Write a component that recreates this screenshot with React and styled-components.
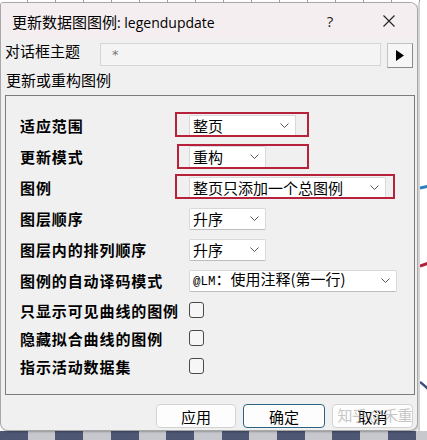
import React from "react";
import styled, { createGlobalStyle } from "styled-components";

const Global = createGlobalStyle`
  html, body { margin: 0; padding: 0; }
  body { font-family: "Noto Sans CJK SC", "Noto Sans", sans-serif; color: #000; }
`;

const CJK = `"Noto Sans CJK SC", "Noto Sans", sans-serif`;

const Page = styled.div`
  position: relative;
  width: 427px;
  height: 440px;
  overflow: hidden;
  display: flex;
  flex-direction: column;
  background: #fff;
`;

const TopStrip = styled.div`
  height: 2px;
  flex: none;
  background: repeating-linear-gradient(90deg, #fff 0 27px, #9a9a9a 27px 28px);
`;

const Middle = styled.div`
  display: flex;
  flex: none;
  height: 429px;
`;

const Dialog = styled.div`
  position: relative;
  box-sizing: border-box;
  width: 418px;
  height: 429px;
  flex: none;
  background: #f0f0f0;
  border: 1px solid #a8a8a8;
  border-radius: 3px 8px 8px 8px;
  display: flex;
  flex-direction: column;
  overflow: hidden;
  box-shadow: 1px 1px 2px rgba(0, 0, 0, 0.25);
`;

const TitleBar = styled.div`
  height: 36px;
  flex: none;
  display: flex;
  align-items: center;
  padding-left: 11px;
  background: #f4eef0;
  font-family: ${CJK};
  font-size: 15px;
`;

const TitleText = styled.span`
  flex: 1;
  letter-spacing: 0;
`;

const Latin = styled.span`
  font-family: "Open Sans", "Noto Sans", sans-serif;
  font-size: 14px;
`;

const Help = styled.span`
  width: 20px;
  text-align: center;
  font-family: "Open Sans", sans-serif;
  font-size: 15px;
  color: #222;
  margin-right: 42px;
`;

const CloseBox = styled.span`
  width: 14px;
  height: 14px;
  display: flex;
  margin-right: 21px;
`;

const Body = styled.div`
  display: flex;
  flex-direction: column;
  padding: 0 3px 0 4px;
`;

const ThemeRow = styled.div`
  display: flex;
  align-items: center;
  height: 25px;
  margin-top: 4px;
`;

const PlainLabel = styled.span`
  font-family: ${CJK};
  font-size: 15px;
  line-height: 20px;
  white-space: nowrap;
`;

const ThemeLabel = styled(PlainLabel)`
  width: 95px;
  flex: none;
  align-self: flex-start;
  margin-top: -2px;
`;

const ThemeInput = styled.div`
  box-sizing: border-box;
  width: 281px;
  height: 23px;
  align-self: flex-start;
  background: #f4f4f4;
  border: 1px solid #d6d6d6;
  color: #7a7a7a;
  font-family: "DejaVu Sans", sans-serif;
  font-size: 13px;
  line-height: 21px;
  padding-left: 11px;
`;

const ArrowButton = styled.div`
  box-sizing: border-box;
  width: 26px;
  height: 25px;
  margin-left: 6px;
  background: #f6f6f6;
  border: 1px solid #c4c4c4;
  border-bottom-color: #8a8a8a;
  border-right-color: #8a8a8a;
  display: flex;
  align-items: center;
  justify-content: center;
`;

const SectionLabel = styled(PlainLabel)`
  height: 20px;
  margin-top: 2px;
  padding-left: 1px;
  display: block;
`;

const Group = styled.div`
  box-sizing: border-box;
  width: 410px;
  margin-top: 5px;
  border: 1px solid #7c7c7c;
  padding: 14px 0 14px 14px;
  display: grid;
  grid-template-columns: 169px 1fr;
  grid-auto-rows: auto;
  align-items: center;
`;

const Label = styled.div`
  height: ${(p) => p.$h}px;
  display: flex;
  align-items: center;
  font-family: ${CJK};
  font-weight: 700;
  font-size: 15px;
  letter-spacing: 0.9px;
  white-space: nowrap;
`;

const Cell = styled.div`
  position: relative;
  height: ${(p) => p.$h}px;
  display: flex;
  align-items: center;
`;

const Select = styled.div`
  box-sizing: border-box;
  width: ${(p) => p.$w}px;
  height: 22px;
  background: #fff;
  border: 1px solid #d9d9d9;
  border-bottom-color: #bdbdbd;
  border-radius: 2px;
  display: flex;
  align-items: center;
  padding: 0 6px 0 3px;
  font-family: ${CJK};
  font-size: 15px;
  white-space: nowrap;
`;

const SelectText = styled.span`
  flex: 1;
  line-height: 20px;
`;

const Mono = styled.span`
  font-family: "Liberation Mono", monospace;
  font-size: 12.5px;
`;

const Highlight = styled.div`
  position: absolute;
  box-sizing: border-box;
  left: ${(p) => p.$l}px;
  top: ${(p) => p.$t}px;
  width: ${(p) => p.$w}px;
  height: 25px;
  border: 2px solid #b8213a;
  pointer-events: none;
`;

const Checkbox = styled.div`
  box-sizing: border-box;
  width: 15px;
  height: 16px;
  border: 1px solid #4a4a4a;
  border-radius: 3px;
  background: #f6f6f6;
`;

const Buttons = styled.div`
  display: flex;
  justify-content: flex-end;
  gap: 7px;
  margin-top: 9px;
  padding-right: 1px;
`;

const Button = styled.div`
  box-sizing: border-box;
  width: ${(p) => p.$w}px;
  height: 24px;
  background: #fdfdfd;
  border: 1px solid ${(p) => (p.$primary ? "#2c6382" : "#d2d2d2")};
  border-radius: 4px;
  display: flex;
  align-items: center;
  justify-content: center;
  font-family: ${CJK};
  font-size: 15px;
`;

const Watermark = styled.div`
  position: absolute;
  right: 5px;
  bottom: 5px;
  font-family: ${CJK};
  font-size: 15px;
  color: rgba(150, 150, 150, 0.55);
  letter-spacing: -0.5px;
  pointer-events: none;
  white-space: nowrap;
`;

const SideCanvas = styled.div`
  flex: 1;
  position: relative;
  background: #fff;
  border-left: 2px solid #d4d4d4;
  overflow: hidden;
`;

const BottomStrip = styled.div`
  flex: 1;
  background: repeating-linear-gradient(
    90deg,
    #4d5672 0 27.7px,
    #c6c8cd 27.7px 55.4px
  );
`;

const Chevron = () => (
  <svg width="9" height="5" viewBox="0 0 9 5">
    <polyline points="0.5,0.5 4.5,4.5 8.5,0.5" fill="none" stroke="#555" strokeWidth="1" />
  </svg>
);

const SelectBox = ({ w, children }) => (
  <Select $w={w}>
    <SelectText>{children}</SelectText>
    <Chevron />
  </Select>
);

const rows = [
  { label: "适应范围", w: 107, value: "整页", hl: { l: -14, t: 2, w: 134 } },
  { label: "更新模式", w: 77, value: "重构", hl: { l: -12, t: 3, w: 132 } },
  { label: "图例", w: 197, value: "整页只添加一个总图例", hl: { l: -14, t: 2, w: 220 } },
  { label: "图层顺序", w: 77, value: "升序" },
  { label: "图层内的排列顺序", w: 77, value: "升序" },
  {
    label: "图例的自动译码模式",
    w: 208,
    value: (
      <>
        <Mono>@LM</Mono>：使用注释(第一行)
      </>
    ),
  },
];

const checks = ["只显示可见曲线的图例", "隐藏拟合曲线的图例", "指示活动数据集"];

export default function App() {
  return (
    <>
      <Global />
      <Page>
        <TopStrip />
        <Middle>
          <Dialog>
            <TitleBar>
              <TitleText>
                更新数据图图例<Latin>: legendupdate</Latin>
              </TitleText>
              <Help>?</Help>
              <CloseBox>
                <svg width="14" height="14" viewBox="0 0 14 14">
                  <path d="M1.5 1.5 L12.5 12.5 M12.5 1.5 L1.5 12.5" stroke="#222" strokeWidth="1.1" />
                </svg>
              </CloseBox>
            </TitleBar>
            <Body>
              <ThemeRow>
                <ThemeLabel>对话框主题</ThemeLabel>
                <ThemeInput>*</ThemeInput>
                <ArrowButton>
                  <svg width="8" height="11" viewBox="0 0 8 11">
                    <polygon points="0,0 8,5.5 0,11" fill="#000" />
                  </svg>
                </ArrowButton>
              </ThemeRow>
              <SectionLabel>更新或重构图例</SectionLabel>
              <Group>
                {rows.map((r, i) => (
                  <React.Fragment key={i}>
                    <Label $h={31}>{r.label}</Label>
                    <Cell $h={31}>
                      <SelectBox w={r.w}>{r.value}</SelectBox>
                      {r.hl && <Highlight $l={r.hl.l} $t={r.hl.t} $w={r.hl.w} />}
                    </Cell>
                  </React.Fragment>
                ))}
                {checks.map((c) => (
                  <React.Fragment key={c}>
                    <Label $h={28}>{c}</Label>
                    <Cell $h={28}>
                      <Checkbox />
                    </Cell>
                  </React.Fragment>
                ))}
              </Group>
              <Buttons>
                <Button $w={80}>应用</Button>
                <Button $w={82} $primary>
                  确定
                </Button>
                <Button $w={81}>取消</Button>
              </Buttons>
            </Body>
            <Watermark>知乎 @禾重</Watermark>
          </Dialog>
          <SideCanvas>
            <svg width="10" height="429" viewBox="0 0 10 429">
              <path d="M0 186 L9 184" stroke="#2b7fc1" strokeWidth="3" fill="none" />
              <path d="M0 264 L9 261" stroke="#b0223c" strokeWidth="3" fill="none" />
              <path d="M0 380 Q5 384 9 388" stroke="#3c4f7a" strokeWidth="2.5" fill="none" />
            </svg>
          </SideCanvas>
        </Middle>
        <BottomStrip />
      </Page>
    </>
  );
}
